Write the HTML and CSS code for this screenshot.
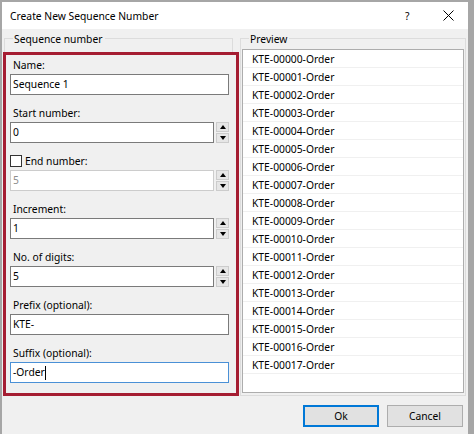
FILE: index.html
```html
<html>
<head>
    <title>Create New Sequence Number</title>
    <link rel="stylesheet" href="styles.css">
</head>
<body>
<div class="window">
    <div class="titlebar">
        <span class="title">Create New Sequence Number</span>
        <span class="help">?</span>
        <svg class="close" width="11" height="11" viewBox="0 0 11 11">
            <path d="M0.5 0.5 L10.5 10.5 M10.5 0.5 L0.5 10.5" stroke="#000" stroke-width="1" fill="none"/>
        </svg>
    </div>
    <div class="content">
        <div class="left">
            <div class="group-head"><span>Sequence number</span></div>
            <div class="group-sides"></div>
            <div class="form">
                <div class="field">
                    <div class="label">Name:</div>
                    <div class="box">Sequence 1</div>
                </div>
                <div class="field">
                    <div class="label">Start number:</div>
                    <div class="numrow">
                        <div class="box">0</div>
                        <div class="spin"><span class="up"></span><span class="down"></span></div>
                    </div>
                </div>
                <div class="field">
                    <div class="label check"><span class="checkbox"></span>End number:</div>
                    <div class="numrow">
                        <div class="box disabled">5</div>
                        <div class="spin"><span class="up"></span><span class="down"></span></div>
                    </div>
                </div>
                <div class="field">
                    <div class="label">Increment:</div>
                    <div class="numrow">
                        <div class="box">1</div>
                        <div class="spin"><span class="up"></span><span class="down"></span></div>
                    </div>
                </div>
                <div class="field">
                    <div class="label">No. of digits:</div>
                    <div class="numrow">
                        <div class="box">5</div>
                        <div class="spin"><span class="up"></span><span class="down"></span></div>
                    </div>
                </div>
                <div class="field">
                    <div class="label">Prefix (optional):</div>
                    <div class="box">KTE-</div>
                </div>
                <div class="field">
                    <div class="label">Suffix (optional):</div>
                    <div class="box focus">-Order<span class="caret"></span></div>
                </div>
            </div>
        </div>
        <div class="right">
            <div class="group-head"><span>Preview</span></div>
            <div class="group-body">
                <div class="list">
                    <div class="row">KTE-00000-Order</div>
                    <div class="row">KTE-00001-Order</div>
                    <div class="row">KTE-00002-Order</div>
                    <div class="row">KTE-00003-Order</div>
                    <div class="row">KTE-00004-Order</div>
                    <div class="row">KTE-00005-Order</div>
                    <div class="row">KTE-00006-Order</div>
                    <div class="row">KTE-00007-Order</div>
                    <div class="row">KTE-00008-Order</div>
                    <div class="row">KTE-00009-Order</div>
                    <div class="row">KTE-00010-Order</div>
                    <div class="row">KTE-00011-Order</div>
                    <div class="row">KTE-00012-Order</div>
                    <div class="row">KTE-00013-Order</div>
                    <div class="row">KTE-00014-Order</div>
                    <div class="row">KTE-00015-Order</div>
                    <div class="row">KTE-00016-Order</div>
                    <div class="row">KTE-00017-Order</div>
                </div>
            </div>
            <div class="buttons">
                <button class="btn default">Ok</button>
                <button class="btn">Cancel</button>
            </div>
        </div>
    </div>
</div>
</body>
</html>
```

FILE: styles.css
```css
* {
    box-sizing: border-box;
}
body {
    margin: 0;
    background: #a6a6a6;
    font-family: "Noto Sans", sans-serif;
    font-size: 10.3px;
    color: #000;
}
.window {
    margin: 2px 0 0 2px;
    width: 466px;
    height: 432px;
    background: #f0f0f0;
}
.titlebar {
    height: 27px;
    background: #fff;
    display: flex;
    align-items: center;
    padding-left: 8px;
}
.title {
    flex: 1;
}
.help {
    width: 6px;
    margin-right: 32px;
}
.close {
    margin-right: 14px;
}
.content {
    display: flex;
    padding-top: 2px;
}

/* group box header with frame line */
.group-head {
    display: flex;
    height: 16px;
    line-height: 16px;
    color: #000;
}
.group-head::before {
    content: "";
    width: 8px;
    height: 8px;
    align-self: flex-end;
    border-top: 1px solid #dcdcdc;
    border-left: 1px solid #dcdcdc;
}
.group-head::after {
    content: "";
    flex: 1;
    height: 8px;
    align-self: flex-end;
    border-top: 1px solid #dcdcdc;
    border-right: 1px solid #dcdcdc;
    margin-left: 2px;
}
.group-head span {
    padding-left: 1px;
}

.left {
    width: 236px;
    margin-left: 1px;
}
.left .group-head {
    margin: 0 6px 0 1px;
}
.group-sides {
    height: 5px;
    margin: 0 6px 0 1px;
    border-left: 1px solid #dcdcdc;
    border-right: 1px solid #dcdcdc;
}
.form {
    border: 3px solid #a51d32;
    height: 344px;
    padding: 2px 7px 0 4px;
}
.field {
    margin-bottom: 10px;
}
.label {
    height: 16px;
    line-height: 16px;
    padding-left: 3px;
    margin-bottom: 1px;
}
.label.check {
    display: flex;
    align-items: center;
    padding-left: 0;
}
.checkbox {
    width: 12px;
    height: 12px;
    border: 1px solid #333;
    background: #fff;
    margin-right: 3px;
}
.box {
    height: 21px;
    line-height: 19px;
    border: 1px solid #7a7a7a;
    background: #fff;
    padding-left: 2px;
    flex: 1;
    display: flex;
    align-items: center;
}
.box.disabled {
    border-color: #cccccc;
    color: #8d8d8d;
}
.box.focus {
    border-color: #4a90d6;
}
.caret {
    width: 1px;
    height: 14px;
    background: #000;
}
.numrow {
    display: flex;
    gap: 2px;
}
.spin {
    width: 13px;
    height: 21px;
    display: flex;
    flex-direction: column;
    gap: 1px;
}
.spin span {
    flex: 1;
    background: #e6e6e6;
    border: 1px solid #cccccc;
    display: flex;
    align-items: center;
    justify-content: center;
}
.spin .up::after {
    content: "";
    border-left: 3.5px solid transparent;
    border-right: 3.5px solid transparent;
    border-bottom: 4px solid #000;
}
.spin .down::after {
    content: "";
    border-left: 3.5px solid transparent;
    border-right: 3.5px solid transparent;
    border-top: 4px solid #000;
}

.right {
    width: 226px;
    margin-left: 1px;
}
.group-body {
    border-left: 1px solid #dcdcdc;
    border-right: 1px solid #dcdcdc;
    border-bottom: 1px solid #dcdcdc;
    padding: 2px 1px 2px 1px;
}
.list {
    height: 344px;
    background: #fff;
    border: 1px solid #adadad;
}
.row {
    height: 18px;
    line-height: 18px;
    border-bottom: 1px solid #f0f0f0;
    padding-left: 9px;
}
.buttons {
    display: flex;
    justify-content: flex-end;
    gap: 8px;
    margin-top: 9px;
    padding-right: 3px;
}
.btn {
    width: 76px;
    height: 22px;
    background: #e1e1e1;
    border: 1px solid #adadad;
    font-family: "Noto Sans", sans-serif;
    font-size: 10.3px;
    color: #000;
    padding: 0;
}
.btn.default {
    border: 1px solid #0078d7;
    box-shadow: inset 0 0 0 1px #0078d7;
}
```
